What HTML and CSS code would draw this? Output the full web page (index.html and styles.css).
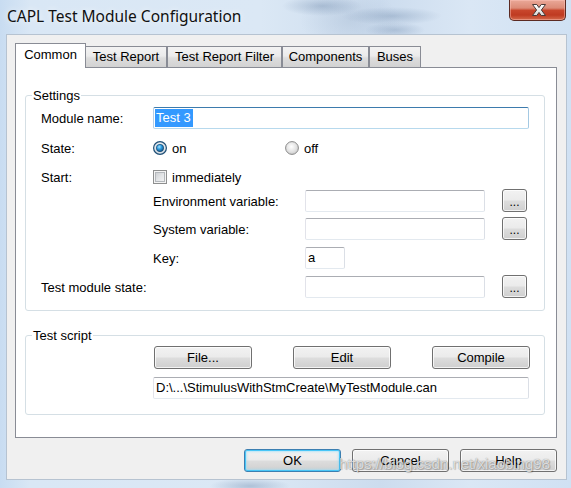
FILE: index.html
```html
<!DOCTYPE html>
<html>
<head>
<meta charset="utf-8">
<title>CAPL Test Module Configuration</title>
<link rel="stylesheet" href="styles.css">
</head>
<body>
<div class="window">
  <div class="titlebar">
    <span class="title">CAPL Test Module Configuration</span>
    <div class="close">
      <svg width="16" height="14" viewBox="0 0 16 14">
        <defs>
          <linearGradient id="xg" x1="0" y1="0" x2="0" y2="1">
            <stop offset="0" stop-color="#ffffff"/>
            <stop offset="1" stop-color="#d8d8d8"/>
          </linearGradient>
        </defs>
        <path d="M1.5 1.5 H5.8 L8 4.6 L10.2 1.5 H14.5 L10.4 7 L14.5 12.5 H10.2 L8 9.4 L5.8 12.5 H1.5 L5.6 7 Z" fill="url(#xg)" stroke="#4a3a38" stroke-width="1" stroke-linejoin="round"/>
      </svg>
    </div>
  </div>

  <div class="client">
    <div class="tabs">
      <div class="tab active">Common</div>
      <div class="tab t-report">Test Report</div>
      <div class="tab t-filter">Test Report Filter</div>
      <div class="tab t-comp">Components</div>
      <div class="tab t-buses">Buses</div>
    </div>

    <div class="panel">
      <fieldset class="group settings">
        <legend>Settings</legend>
        <div class="group-body settings-body">

          <div class="row r-name">
            <span class="lbl c1">Module name:</span>
            <div class="field focus wide"><span class="sel">Test 3</span></div>
          </div>

          <div class="row r-state">
            <span class="lbl c1">State:</span>
            <div class="radios">
              <label class="opt opt-on">
                <svg class="radio" width="14" height="14" viewBox="0 0 14 14">
                  <defs>
                    <radialGradient id="dot" cx="40%" cy="35%" r="70%">
                      <stop offset="0" stop-color="#a8e4ff"/>
                      <stop offset="0.45" stop-color="#2b9be0"/>
                      <stop offset="1" stop-color="#0b4a7e"/>
                    </radialGradient>
                    <radialGradient id="ringOn" cx="50%" cy="40%" r="60%">
                      <stop offset="0" stop-color="#ffffff"/>
                      <stop offset="1" stop-color="#cdd6de"/>
                    </radialGradient>
                  </defs>
                  <circle cx="7" cy="7" r="6.4" fill="url(#ringOn)" stroke="#1f4f76" stroke-width="1.2"/>
                  <circle cx="7" cy="7" r="3.7" fill="url(#dot)" stroke="#0d3d63" stroke-width="0.6"/>
                </svg>
                <span>on</span>
              </label>
              <label class="opt">
                <svg class="radio" width="14" height="14" viewBox="0 0 14 14">
                  <defs>
                    <radialGradient id="offg" cx="45%" cy="40%" r="65%">
                      <stop offset="0" stop-color="#ffffff"/>
                      <stop offset="0.6" stop-color="#e2e2e2"/>
                      <stop offset="1" stop-color="#c6c6c6"/>
                    </radialGradient>
                  </defs>
                  <circle cx="7" cy="7" r="6.4" fill="url(#offg)" stroke="#8a8a8a" stroke-width="1"/>
                </svg>
                <span>off</span>
              </label>
            </div>
          </div>

          <div class="row r-start">
            <span class="lbl c1">Start:</span>
            <label class="opt c2">
              <span class="check"></span>
              <span>immediately</span>
            </label>
          </div>

          <div class="row r-env">
            <span class="lbl c2">Environment variable:</span>
            <div class="field c3"></div>
            <div class="btn dots c5">...</div>
          </div>

          <div class="row r-sys">
            <span class="lbl c2">System variable:</span>
            <div class="field c3"></div>
            <div class="btn dots c5">...</div>
          </div>

          <div class="row r-key">
            <span class="lbl c2">Key:</span>
            <div class="field c3 key">a</div>
          </div>

          <div class="row r-tms">
            <span class="lbl c12">Test module state:</span>
            <div class="field c3"></div>
            <div class="btn dots c5">...</div>
          </div>
        </div>
      </fieldset>

      <fieldset class="group script">
        <legend>Test script</legend>
        <div class="group-body script-body">
          <div class="script-buttons">
            <div class="btn sbtn">File...</div>
            <div class="btn sbtn">Edit</div>
            <div class="btn sbtn">Compile</div>
          </div>
          <div class="field path">D:\...\StimulusWithStmCreate\MyTestModule.can</div>
        </div>
      </fieldset>
    </div>

    <div class="footer">
      <div class="btn fbtn default">OK</div>
      <div class="btn fbtn">Cancel</div>
      <div class="btn fbtn">Help</div>
    </div>
  </div>

  <div class="watermark">https://blog.csdn.net/xiaobing98</div>
</div>
</body>
</html>
```

FILE: styles.css
```css
* {
  box-sizing: border-box;
}

html,
body {
  margin: 0;
  padding: 0;
}

body {
  width: 571px;
  height: 488px;
  overflow: hidden;
  font-family: "Liberation Sans", Arial, sans-serif;
  font-size: 13px;
  color: #000;
}

.window {
  position: relative;
  width: 571px;
  height: 488px;
  overflow: hidden;
  background:
    radial-gradient(ellipse 40px 10px at 322px 6px, rgba(96, 124, 160, 0.35), transparent),
    radial-gradient(ellipse 50px 9px at 392px 16px, rgba(96, 124, 160, 0.32), transparent),
    radial-gradient(ellipse 30px 8px at 395px 30px, rgba(96, 124, 160, 0.3), transparent),
    radial-gradient(ellipse 50px 30px at 350px 20px, rgba(160, 180, 205, 0.35), transparent),
    radial-gradient(ellipse 40px 8px at 250px 486px, rgba(90, 120, 160, 0.35), transparent),
    linear-gradient(to right, #c8dcf1 0px, #d9e7f5 30px, #dbe8f5 260px, #ccdcee 380px, #dae7f5 470px, #d0e1f3 571px);
}

.titlebar {
  height: 34px;
  display: flex;
  justify-content: space-between;
  align-items: flex-start;
}

.title {
  margin: 6px 0 0 7px;
  font-family: "Noto Sans", "Open Sans", sans-serif;
  font-size: 15.5px;
  line-height: 21px;
  color: #101010;
  text-shadow: 0 0 6px rgba(255, 255, 255, 0.9);
}

.close {
  width: 57px;
  height: 21px;
  margin-right: 5px;
  display: flex;
  align-items: center;
  justify-content: center;
  padding-left: 3px;
  border: 1px solid #5b2a22;
  border-top: none;
  border-radius: 0 0 5px 5px;
  background: linear-gradient(#eaa898 0%, #dc8b77 40%, #c8462c 52%, #bf3a21 75%, #d46a4c 100%);
  box-shadow: inset 0 0 0 1px rgba(255, 200, 190, 0.45);
}

.client {
  margin-left: 6px;
  width: 561px;
  height: 446px;
  border: 1px solid #b6c3d1;
  background: #f0f0f0;
  padding: 8px 0 0 8px;
}

/* Tabs */
.tabs {
  display: flex;
  align-items: flex-end;
  height: 24px;
}

.tab {
  height: 21px;
  padding-top: 2px;
  line-height: 15px;
  text-align: center;
  border: 1px solid #898c95;
  border-bottom: none;
  background: linear-gradient(#f3f3f3 0%, #ebebeb 45%, #dddddd 55%, #d2d2d2 100%);
  white-space: nowrap;
}

.tab.active {
  position: relative;
  z-index: 1;
  width: 71px;
  height: 25px;
  margin-bottom: -1px;
  padding-top: 3px;
  background: #fff;
}

.t-report {
  width: 82px;
  margin-left: -1px;
}

.t-filter {
  width: 115px;
}

.t-comp {
  width: 87px;
}

.t-buses {
  width: 52px;
}

.panel {
  width: 542px;
  height: 371px;
  border: 1px solid #898c95;
  background: #fff;
  padding: 20px 0 0 9px;
}

/* Group boxes */
.group {
  width: 520px;
  margin: 0;
  padding: 0;
  min-width: 0;
  border: 1px solid #d5dfe5;
  border-radius: 3px;
}

.group legend {
  margin-left: 6px;
  padding: 0 1px;
  line-height: 15px;
}

.settings-body {
  padding: 0 0 12px 15px;
}

.row {
  display: grid;
  grid-template-columns: 112px 152px 180px 17px 26px;
  align-items: center;
  height: 22px;
}

.r-name {
  margin-top: 4px;
}

.r-state {
  margin-top: 8px;
}

.r-start {
  margin-top: 7px;
}

.r-env {
  margin-top: 1px;
  height: 23px;
}

.r-sys {
  margin-top: 5px;
  height: 23px;
}

.r-key {
  margin-top: 6px;
  height: 23px;
}

.r-tms {
  margin-top: 6px;
  height: 23px;
}

.lbl {
  line-height: 15px;
  white-space: nowrap;
}

.c1 {
  grid-column: 1;
}

.c2 {
  grid-column: 2;
}

.c12 {
  grid-column: 1 / 3;
}

.c3 {
  grid-column: 3;
}

.c5 {
  grid-column: 5;
}

.r-env .lbl,
.r-sys .lbl,
.r-key .lbl,
.r-tms .lbl {
  padding-top: 2px;
}

/* Inputs */
.field {
  height: 22px;
  border: 1px solid;
  border-color: #abadb3 #dbdfe6 #e3e9ef #e2e3ea;
  border-radius: 2px;
  background: #fff;
  padding: 0 2px;
  line-height: 20px;
  white-space: nowrap;
  overflow: hidden;
}

.r-env .field,
.r-sys .field,
.r-key .field,
.r-tms .field {
  align-self: end;
}

.field.focus {
  border-color: #3d7bad #a4c9e3 #b7d9ed #b5cfe7;
  padding-left: 1px;
}

.field.wide {
  grid-column: 2 / 6;
  width: 376px;
}

.sel {
  display: inline-block;
  line-height: 18px;
  padding: 0 2px 0 1px;
  margin-top: 1px;
  vertical-align: top;
  background: #3399ff;
  color: #fff;
}

.field.key {
  width: 40px;
}

/* Radios & checkbox */
.radios {
  grid-column: 2 / 5;
  display: flex;
}

.opt {
  display: flex;
  align-items: center;
  gap: 5px;
  line-height: 15px;
}

.opt-on {
  width: 132px;
}

.radio {
  display: block;
  flex: none;
}

.check {
  display: block;
  width: 14px;
  height: 14px;
  border: 1px solid #8e8f8f;
  background: linear-gradient(135deg, #c4c7cb 0%, #e2e4e6 50%, #f7f7f7 100%);
  box-shadow: inset 0 0 0 1px #f4f4f4, inset 0 0 0 2px #b4b8bc;
}

/* Buttons */
.btn {
  display: flex;
  align-items: center;
  justify-content: center;
  height: 23px;
  border: 1px solid #707070;
  border-radius: 3px;
  background: linear-gradient(#f2f2f2 0%, #ebebeb 48%, #dddddd 52%, #cfcfcf 100%);
  box-shadow: inset 0 0 0 1px rgba(255, 255, 255, 0.75);
  line-height: 15px;
  white-space: nowrap;
}

.dots {
  width: 25px;
  padding-top: 3px;
  font-size: 12px;
}

.script {
  margin-top: 17px;
}

.script-body {
  padding: 3px 0 15px 127px;
}

.script-buttons {
  display: flex;
  justify-content: space-between;
  width: 377px;
  padding-left: 1px;
}

.sbtn {
  width: 98px;
}

.field.path {
  margin-top: 8px;
  width: 376px;
  padding-left: 2px;
}

.footer {
  width: 542px;
  margin-top: 11px;
  display: flex;
  justify-content: flex-end;
  gap: 11px;
}

.fbtn {
  width: 97px;
}

.fbtn.default {
  border-color: #3c7fb1;
  box-shadow: inset 0 0 0 1px #48c6f7, inset 0 0 2px 2px rgba(150, 220, 250, 0.6);
}

/* Watermark overlay */
.watermark {
  position: absolute;
  left: 339px;
  top: 455px;
  font-size: 15px;
  line-height: 18px;
  color: rgba(255, 255, 255, 0.72);
  text-shadow: 0 0 1px rgba(60, 60, 60, 0.6), 1px 1px 1px rgba(0, 0, 0, 0.2);
  white-space: nowrap;
}
```
